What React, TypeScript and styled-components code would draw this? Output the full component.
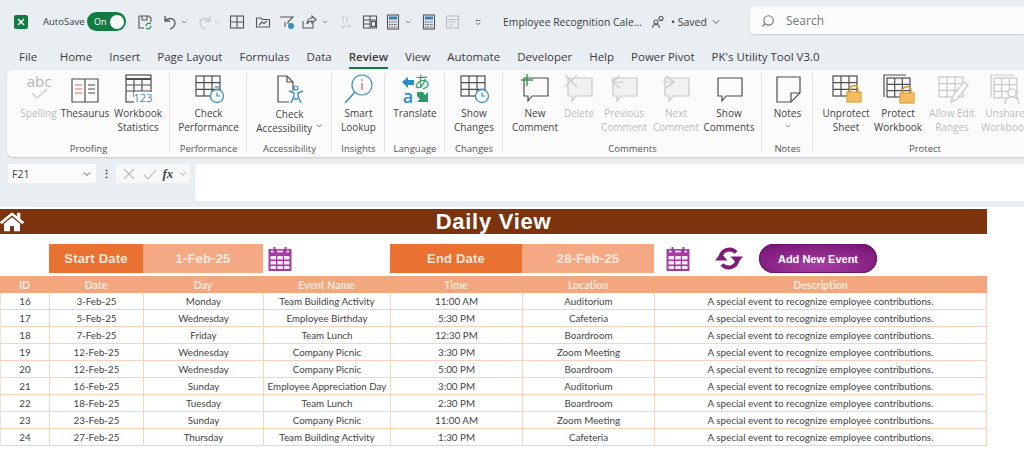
import React from "react";
import styled, { createGlobalStyle } from "styled-components";
import { FaHome } from "react-icons/fa";
import { FiChevronDown, FiSearch } from "react-icons/fi";

const GlobalStyle = createGlobalStyle`
  html, body {
    margin: 0;
    padding: 0;
    background: #fff;
    overflow: hidden;
  }
`;

const uiFont = `"Open Sans", "Noto Sans", sans-serif`;
const sheetFont = `"Lato", "Noto Sans", sans-serif`;
const ink = "#4f4f4f";
const off = "#c9c9c9";

const Page = styled.div`
  width: 1024px;
  height: 474px;
  overflow: hidden;
  background: #fff;
  font-family: ${uiFont};
  color: #3c3c3c;
`;

const Chrome = styled.div`
  height: 207px;
  background: #e9eef3;
  overflow: hidden;
`;

const TitleBar = styled.div`
  height: 43px;
  display: flex;
  align-items: center;
  padding-left: 14px;
`;

const Qat = styled.span<{ $ml: number; $w?: number }>`
  display: inline-flex;
  align-items: center;
  justify-content: center;
  flex: none;
  margin-left: ${(p) => p.$ml}px;
  width: ${(p) => p.$w ?? 16}px;
  height: 18px;
`;

const AutoSaveLabel = styled.span`
  margin-left: 15px;
  font-size: 9.5px;
  width: 38px;
  flex: none;
  white-space: nowrap;
`;

const Toggle = styled.span`
  margin-left: 6px;
  width: 39px;
  height: 19px;
  flex: none;
  border-radius: 10px;
  background: #107c41;
  color: #fff;
  font-size: 9px;
  display: flex;
  align-items: center;
  justify-content: space-between;
  padding: 0 2px 0 7px;
  box-sizing: border-box;
`;

const Knob = styled.span`
  width: 14px;
  height: 14px;
  border-radius: 50%;
  background: #fff;
`;

const DocTitle = styled.span`
  margin-left: 19px;
  width: 137px;
  flex: none;
  font-size: 10.4px;
  white-space: nowrap;
`;

const SavedLabel = styled.span`
  margin-left: 5px;
  width: 72px;
  flex: none;
  font-size: 10.5px;
  display: flex;
  align-items: center;
  gap: 3px;
  white-space: nowrap;
`;

const SearchBox = styled.div`
  margin-left: 7px;
  flex: 1;
  height: 27px;
  margin-top: -2px;
  background: #fbfcfd;
  border-radius: 4px 0 0 4px;
  box-shadow: 0 1px 2px rgba(0, 0, 0, 0.14);
  display: flex;
  align-items: center;
  gap: 11px;
  padding-left: 11px;
  font-size: 12px;
  color: #777;
`;

const Tabs = styled.div`
  height: 27px;
  display: flex;
  align-items: center;
  gap: 17px;
  padding-left: 19px;
  font-size: 11.5px;
`;

const Tab = styled.span<{ $active?: boolean }>`
  position: relative;
  white-space: nowrap;
  font-weight: ${(p) => (p.$active ? 600 : 400)};

  &:first-child {
    margin-right: 5.5px;
  }

  &::after {
    content: "";
    display: ${(p) => (p.$active ? "block" : "none")};
    position: absolute;
    left: 0;
    right: 0;
    bottom: -5px;
    height: 2px;
    background: #107c41;
  }
`;

const Ribbon = styled.div`
  margin-left: 7px;
  height: 87px;
  width: 1040px;
  display: flex;
  background: #fbfbfb;
  border-radius: 6px 0 0 6px;
  box-shadow: 0 1px 2px rgba(0, 0, 0, 0.16);
`;

const Group = styled.div<{ $w: number; $pl?: number }>`
  position: relative;
  flex: none;
  width: ${(p) => p.$w}px;
  padding-left: ${(p) => p.$pl ?? 0}px;
  box-sizing: border-box;
  display: flex;
  flex-direction: column;

  &::after {
    content: "";
    position: absolute;
    right: 0;
    top: 3px;
    bottom: 5px;
    width: 1px;
    background: #e1e1e1;
  }
`;

const ButtonRow = styled.div`
  height: 72px;
  display: flex;
`;

const RibbonButton = styled.div<{ $w: number; $off?: boolean; $drop?: number }>`
  flex: none;
  width: ${(p) => p.$w}px;
  padding-top: 3px;
  display: flex;
  flex-direction: column;
  align-items: center;
  font-size: 10px;
  line-height: 14px;
  text-align: center;
  white-space: nowrap;
  color: ${(p) => (p.$off ? "#bdbdbd" : "#444")};

  svg {
    flex: none;
    overflow: visible;
    margin-bottom: ${(p) => 1 + (p.$drop ?? 0)}px;
  }
`;

const GroupLabel = styled.div<{ $pull?: number }>`
  margin-left: ${(p) => -(p.$pull ?? 0)}px;
  text-align: center;
  font-size: 9.5px;
  line-height: 14px;
  color: #555;
`;

const FormulaRow = styled.div`
  margin-top: 7px;
  padding-left: 8px;
  display: flex;
  align-items: flex-start;
`;

const NameBox = styled.div`
  width: 88px;
  height: 19px;
  box-sizing: border-box;
  background: #fbfcfd;
  border-radius: 2px;
  display: flex;
  align-items: center;
  justify-content: space-between;
  padding: 0 3px 0 4px;
  font-size: 10.5px;
`;

const Dots = styled.span`
  width: 20px;
  text-align: center;
  font-size: 11px;
  line-height: 19px;
  font-weight: 700;
`;

const FxBox = styled.div`
  width: 74px;
  height: 19px;
  background: #f6f8fa;
  border-radius: 2px;
  display: flex;
  align-items: center;
  justify-content: space-between;
  padding: 0 2px 0 5px;
  box-sizing: border-box;
`;

const FxLabel = styled.span`
  font-family: "Liberation Serif", serif;
  font-style: italic;
  font-weight: 700;
  font-size: 13px;
  color: #444;
`;

const FormulaInput = styled.div`
  margin-left: 5px;
  flex: 1;
  height: 37px;
  background: #fff;
  border-radius: 3px 0 0 3px;
`;

const Sheet = styled.div`
  padding-top: 2px;
  width: 987px;
  font-family: ${sheetFont};
`;

const Banner = styled.div`
  height: 25px;
  display: grid;
  grid-template-columns: 25px 1fr 25px;
  align-items: center;
  background: #7b340e;
  color: #fff;
  font-family: "Liberation Sans", Arial, sans-serif;
  font-weight: 700;
  font-size: 22px;
  letter-spacing: 0.7px;
  text-align: center;
`;

const HomeGlyph = styled(FaHome)`
  width: 24px;
  height: 22px;
  color: #fff;
`;

const columns = "49px 94px 120px 127px 132px 132px 333px";

const FilterRow = styled.div`
  display: grid;
  grid-template-columns: ${columns};
  height: 25px;
  margin: 10px 0 7px;
  align-items: stretch;
`;

const DateCell = styled.div<{ $label?: boolean }>`
  display: flex;
  align-items: center;
  justify-content: center;
  background: ${(p) => (p.$label ? "#e97132" : "#f4a884")};
  color: ${(p) => (p.$label ? "#fde6d8" : "#fdebe0")};
  font-family: "Liberation Sans", Arial, sans-serif;
  font-weight: 700;
  font-size: 13px;
  letter-spacing: 0.2px;
`;

const ToolCell = styled.div`
  display: flex;
  align-items: center;
  padding-left: 5px;
`;

const EventTools = styled.div`
  display: flex;
  align-items: center;
  padding-left: 12px;
`;

const RefreshIcon = styled.svg`
  margin-left: 25px;
  flex: none;
`;

const AddButton = styled.div`
  margin-left: 16px;
  width: 118px;
  height: 29px;
  flex: none;
  border-radius: 15px;
  background: radial-gradient(ellipse 70% 90% at 50% 75%, #a83fa3 0%, #8a2587 60%, #741672 100%);
  box-shadow: inset 0 0 0 1px #74146f;
  color: #fff;
  display: flex;
  align-items: center;
  justify-content: center;
  font-family: "Liberation Sans", Arial, sans-serif;
  font-weight: 700;
  font-size: 11px;
`;

const Table = styled.div`
  display: grid;
  grid-template-columns: ${columns};
  grid-auto-rows: 17px;
`;

const HeadCell = styled.div`
  display: flex;
  align-items: center;
  justify-content: center;
  background: #f2a77f;
  color: #fce9de;
  font-weight: 700;
  font-size: 10.5px;
`;

const BodyCell = styled.div`
  display: flex;
  align-items: center;
  justify-content: center;
  box-sizing: border-box;
  border-left: 1px solid #f5d3bf;
  border-bottom: 1px solid #f5d3bf;
  font-size: 9.8px;
  color: #444;
  white-space: nowrap;

  &:first-child,
  &:nth-child(7n + 1) {
    border-left-color: #eee3dc;
  }

  &:nth-child(7n) {
    border-right: 1px solid #f5d3bf;
  }
`;

const headers = ["ID", "Date", "Day", "Event Name", "Time", "Location", "Description"];
const blurb = "A special event to recognize employee contributions.";

const rows = [
  ["16", "3-Feb-25", "Monday", "Team Building Activity", "11:00 AM", "Auditorium"],
  ["17", "5-Feb-25", "Wednesday", "Employee Birthday", "5:30 PM", "Cafeteria"],
  ["18", "7-Feb-25", "Friday", "Team Lunch", "12:30 PM", "Boardroom"],
  ["19", "12-Feb-25", "Wednesday", "Company Picnic", "3:30 PM", "Zoom Meeting"],
  ["20", "12-Feb-25", "Wednesday", "Company Picnic", "5:00 PM", "Boardroom"],
  ["21", "16-Feb-25", "Sunday", "Employee Appreciation Day", "3:00 PM", "Auditorium"],
  ["22", "18-Feb-25", "Tuesday", "Team Lunch", "2:30 PM", "Boardroom"],
  ["23", "23-Feb-25", "Sunday", "Company Picnic", "11:00 AM", "Zoom Meeting"],
  ["24", "27-Feb-25", "Thursday", "Team Building Activity", "1:30 PM", "Cafeteria"],
];

const tabs = ["File", "Home", "Insert", "Page Layout", "Formulas", "Data", "Review", "View", "Automate", "Developer", "Help", "Power Pivot", "PK's Utility Tool V3.0"];

function Glyph({ children, size = 32 }: { children: React.ReactNode; size?: number }) {
  return (
    <svg width={size} height={size} viewBox="0 0 32 32" fill="none" stroke={ink} strokeWidth="1.2">
      {children}
    </svg>
  );
}

function Small({ children }: { children: React.ReactNode }) {
  return (
    <svg width="16" height="16" viewBox="0 0 16 16" fill="none" stroke="#555" strokeWidth="1.1">
      {children}
    </svg>
  );
}

function Chevron({ size = 8, color = "#666" }: { size?: number; color?: string }) {
  return <FiChevronDown size={size} color={color} style={{ flex: "none" }} />;
}

function SheetGrid({ x = 4, y = 4, w = 22, h = 20, c = ink }: { x?: number; y?: number; w?: number; h?: number; c?: string }) {
  const cw = w / 3;
  const ch = h / 3;
  return (
    <g stroke={c}>
      <rect x={x} y={y} width={w} height={h} />
      <path d={`M${x} ${y + ch}H${x + w}M${x} ${y + 2 * ch}H${x + w}M${x + cw} ${y}V${y + h}M${x + 2 * cw} ${y}V${y + h}`} />
    </g>
  );
}

function Lock({ x, y }: { x: number; y: number }) {
  return (
    <g>
      <path d={`M${x + 3} ${y + 6}V${y + 3}a4 3.4 0 0 1 8 0V${y + 6}`} stroke="#e0a030" strokeWidth="1.6" />
      <rect x={x} y={y + 6} width="14" height="10" fill="#f4bd62" stroke="#e0a030" />
    </g>
  );
}

function Clock({ x, y, r = 6 }: { x: number; y: number; r?: number }) {
  return (
    <g>
      <circle cx={x} cy={y} r={r} fill="#fbfbfb" stroke="#3d8fc0" strokeWidth="1.3" />
      <path d={`M${x} ${y - 3.5}V${y}H${x + 3}`} stroke="#3d8fc0" />
    </g>
  );
}

function Bubble({ c = ink, fill = "none" }: { c?: string; fill?: string }) {
  return <path d="M5 5H29V23H13L9 28V23H5Z" stroke={c} fill={fill} />;
}

function Calendar() {
  return (
    <svg width="24" height="24" viewBox="0 0 24 24">
      <rect x="0.5" y="2" width="23" height="22" fill="#a23c9f" />
      <path d="M3 4.5h3M9 4.5h6M18 4.5h3" stroke="#e8cfe7" strokeWidth="2" />
      <path d="M6.5 0v5M17.5 0v5" stroke="#a23c9f" strokeWidth="2" />
      <g fill="#f6e9f5">
        <rect x="2.5" y="9" width="5.5" height="3.5" />
        <rect x="9.3" y="9" width="5.5" height="3.5" />
        <rect x="16" y="9" width="5.5" height="3.5" />
        <rect x="2.5" y="14" width="5.5" height="3.5" />
        <rect x="9.3" y="14" width="5.5" height="3.5" />
        <rect x="16" y="14" width="5.5" height="3.5" />
        <rect x="2.5" y="19" width="5.5" height="3" />
        <rect x="9.3" y="19" width="5.5" height="3" />
        <rect x="16" y="19" width="5.5" height="3" />
      </g>
    </svg>
  );
}

function Refresh() {
  return (
    <RefreshIcon width="28" height="25" viewBox="0 0 28 25" fill="#7d1d78">
      <path d="M5.5 11A9 9 0 0 1 21 6.5" fill="none" stroke="#7d1d78" strokeWidth="4" />
      <path d="M28 10.5H15.5L22 18Z" />
      <path d="M22.5 14A9 9 0 0 1 7 18.5" fill="none" stroke="#7d1d78" strokeWidth="4" />
      <path d="M0 14.5H12.5L6 7Z" />
    </RefreshIcon>
  );
}

const icons = {
  spelling: (
    <Glyph>
      <text x="16" y="14" textAnchor="middle" fontSize="15" fill="#b5b5b5" stroke="none" fontFamily="Open Sans, sans-serif">abc</text>
      <path d="M9 20l5 5 10-9" stroke={off} />
    </Glyph>
  ),
  thesaurus: (
    <Glyph>
      <path d="M3 6H16V29H3ZM16 6H29V29H16Z" />
      <path d="M6 12h7M6 16h7M6 20h7" stroke="#d9706a" />
      <path d="M19 12h7M19 16h7M19 20h7" />
    </Glyph>
  ),
  stats: (
    <Glyph>
      <rect x="4" y="2" width="25" height="27" />
      <path d="M4 6H29" strokeWidth="2" />
      <path d="M4 12H29M4 18H29M12 6V24M20 6V18" />
      <rect x="12" y="19" width="18" height="11" fill="#fbfbfb" stroke="none" />
      <text x="21" y="29" textAnchor="middle" fontSize="11" fill="#3d8fc0" stroke="none" fontFamily="Open Sans, sans-serif">123</text>
    </Glyph>
  ),
  performance: (
    <Glyph>
      <SheetGrid x={3} y={3} w={24} h={20} />
      <Clock x={24} y={23} r={6.5} />
      <path d="M22 14h4" stroke="#3d8fc0" />
    </Glyph>
  ),
  accessibility: (
    <Glyph>
      <path d="M19 18V9L13 3H4V29H15" />
      <path d="M13 3V9H19" />
      <circle cx="22" cy="15" r="2" stroke="#3d8fc0" />
      <path d="M15 18l5 2v3l-3 7M29 18l-5 2v3l3 7M20 26h4" stroke="#3d8fc0" strokeWidth="1.4" />
    </Glyph>
  ),
  lookup: (
    <Glyph>
      <circle cx="19" cy="12" r="10" stroke="#3d8fc0" />
      <path d="M12 19L2 30" stroke="#3d8fc0" strokeWidth="1.5" />
      <path d="M19 10V17" stroke="#d9706a" strokeWidth="1.4" />
      <circle cx="19" cy="7" r="0.9" fill="#d9706a" stroke="none" />
    </Glyph>
  ),
  translate: (
    <Glyph>
      <path d="M3 9l6-5v3h6v5H9v3Z" fill="#2a8dc5" stroke="none" />
      <text x="23" y="15" textAnchor="middle" fontSize="16" fill="#2e9b6a" stroke="none" fontFamily="Noto Sans CJK JP, sans-serif">あ</text>
      <text x="9" y="30" textAnchor="middle" fontSize="18" fontWeight="600" fill="#2a8dc5" stroke="none" fontFamily="Open Sans, sans-serif">a</text>
      <path d="M18 19h6l2 3 3-3v10H18l3-3-3-3Z" fill="#2e9b6a" stroke="none" />
    </Glyph>
  ),
  changes: (
    <Glyph>
      <SheetGrid x={3} y={3} w={24} h={20} />
      <Clock x={24} y={23} r={6.5} />
    </Glyph>
  ),
  newComment: (
    <Glyph>
      <Bubble />
      <path d="M8 1V13M2 7H14" stroke="#2e9b50" strokeWidth="1.4" />
    </Glyph>
  ),
  deleteComment: (
    <Glyph>
      <Bubble c={off} fill="#f1f1f1" />
      <path d="M2 2L14 14M14 2L2 14" stroke={off} />
    </Glyph>
  ),
  previous: (
    <Glyph>
      <Bubble c={off} fill="#f1f1f1" />
      <path d="M12 3L4 9L12 15M4 9H16" stroke={off} />
    </Glyph>
  ),
  next: (
    <Glyph>
      <Bubble c={off} fill="#f1f1f1" />
      <path d="M6 3L14 9L6 15M14 9H2" stroke={off} />
    </Glyph>
  ),
  showComments: (
    <Glyph>
      <Bubble />
    </Glyph>
  ),
  notes: (
    <Glyph>
      <path d="M5 4H28V20L19 29H5Z" />
      <path d="M28 20H19V29" />
    </Glyph>
  ),
  unprotect: (
    <Glyph>
      <SheetGrid x={3} y={3} w={24} h={20} />
      <Lock x={17} y={13} />
    </Glyph>
  ),
  protect: (
    <Glyph>
      <path d="M2 24V2H24" />
      <SheetGrid x={5} y={5} w={23} h={19} />
      <Lock x={18} y={14} />
    </Glyph>
  ),
  allowEdit: (
    <Glyph>
      <SheetGrid x={3} y={4} w={24} h={20} c={off} />
      <path d="M15 29l2-6L28 9l4 3-11 14Z" stroke={off} fill="#fbfbfb" />
    </Glyph>
  ),
  unshare: (
    <Glyph>
      <path d="M2 24V2H25" stroke={off} />
      <SheetGrid x={5} y={5} w={23} h={20} c={off} />
      <circle cx="23" cy="20" r="4" fill="#fbfbfb" stroke={off} />
      <path d="M16 31c0-5 3-7 7-7s7 2 7 7" fill="#fbfbfb" stroke={off} />
    </Glyph>
  ),
};

type BtnProps = { w: number; icon: keyof typeof icons; lines: string[]; off?: boolean; drop?: number; more?: boolean };

function Btn({ w, icon, lines, off: disabled, drop, more }: BtnProps) {
  return (
    <RibbonButton $w={w} $off={disabled} $drop={drop}>
      {icons[icon]}
      {lines.map((line, i) => (
        <span key={i}>
          {line}
          {more && i === lines.length - 1 ? <Chevron size={8} /> : null}
        </span>
      ))}
    </RibbonButton>
  );
}

function RibbonGroup({ w, pl, label, children }: { w: number; pl?: number; label: string; children: React.ReactNode }) {
  return (
    <Group $w={w} $pl={pl}>
      <ButtonRow>{children}</ButtonRow>
      <GroupLabel $pull={pl}>{label}</GroupLabel>
    </Group>
  );
}

export default function App() {
  return (
    <Page>
      <GlobalStyle />
      <Chrome>
        <TitleBar>
          <Qat $ml={0} $w={14}>
            <svg width="14" height="14" viewBox="0 0 14 14">
              <rect width="14" height="14" rx="2" fill="#107c41" />
              <path d="M4 4l6 6M10 4l-6 6" stroke="#fff" strokeWidth="1.6" />
            </svg>
          </Qat>
          <AutoSaveLabel>AutoSave</AutoSaveLabel>
          <Toggle>
            On
            <Knob />
          </Toggle>
          <Qat $ml={11}>
            <Small>
              <path d="M2 2H12L14 4V8M2 2V14H7M5 2V6H10V2" />
              <path d="M9 12a3 3 0 0 1 5-2M14 12a3 3 0 0 1-5 2" stroke="#2e9b50" strokeWidth="1.4" />
            </Small>
          </Qat>
          <Qat $ml={9}>
            <Small>
              <path d="M3 2V7H8M3 7C6 3 13 4 13 9c0 3-2 5-5 6" strokeWidth="1.3" />
            </Small>
          </Qat>
          <Qat $ml={1} $w={10}>
            <Chevron />
          </Qat>
          <Qat $ml={8}>
            <Small>
              <path d="M13 2V7H8M13 7C10 3 3 4 3 9c0 3 2 5 5 6" stroke="#c4c9cd" strokeWidth="1.3" />
            </Small>
          </Qat>
          <Qat $ml={-2} $w={12}>
            <Chevron color="#bbb" />
          </Qat>
          <Qat $ml={6}>
            <Small>
              <rect x="1.5" y="2" width="13" height="12" />
              <path d="M8 2V14M1.5 8H14.5" />
            </Small>
          </Qat>
          <Qat $ml={10}>
            <Small>
              <path d="M1.5 4H6L7 5.5H14.5V13H1.5Z" />
              <path d="M4 11l3-3 2 1.5L12 7" />
            </Small>
          </Qat>
          <Qat $ml={8}>
            <Small>
              <path d="M1 3H14L9 8V10M6 8V13" />
              <circle cx="12" cy="12" r="3" fill="#3d8fc0" stroke="none" />
            </Small>
          </Qat>
          <Qat $ml={6}>
            <Small>
              <path d="M2 7V14H12V9" />
              <path d="M6 10c0-4 2-6 5-6V2l4 3.5L11 9V7c-2 0-4 1-5 3Z" />
            </Small>
          </Qat>
          <Qat $ml={2} $w={12}>
            <Chevron />
          </Qat>
          <Qat $ml={7}>
            <Small>
              <path d="M5 2V8M9 2V8M3 11l2 3 2-3M9 14l2-3 2 3" stroke="#c4c9cd" />
            </Small>
          </Qat>
          <Qat $ml={8}>
            <Small>
              <rect x="1.5" y="2" width="13" height="12" />
              <path d="M1.5 6H14.5M1.5 10H8M8 2V14" />
              <rect x="9.5" y="7.5" width="4" height="5" />
            </Small>
          </Qat>
          <Qat $ml={7}>
            <Small>
              <rect x="2.5" y="1" width="11" height="14" fill="#dfe5ea" />
              <rect x="4" y="2.5" width="8" height="3" fill="#3d7fb5" stroke="none" />
              <path d="M4 8h8M4 10.5h8M4 13h8" strokeDasharray="1.5 1" />
            </Small>
          </Qat>
          <Qat $ml={1} $w={12}>
            <Chevron />
          </Qat>
          <Qat $ml={7}>
            <Small>
              <rect x="2.5" y="1" width="11" height="14" fill="#dfe5ea" />
              <rect x="4" y="2.5" width="8" height="3" fill="#3d7fb5" stroke="none" />
              <path d="M4 8h8M4 10.5h8M4 13h8" strokeDasharray="1.5 1" />
            </Small>
          </Qat>
          <Qat $ml={8}>
            <Small>
              <rect x="1.5" y="2" width="12" height="12" stroke="#b9bfc4" />
              <path d="M1.5 5.5H13.5M4 8h7M4 11h4" stroke="#b9bfc4" />
            </Small>
          </Qat>
          <Qat $ml={11} $w={12}>
            <Small>
              <path d="M5 6h6M5 8.5l3 3 3-3" />
            </Small>
          </Qat>
          <DocTitle>Employee Recognition Cale...</DocTitle>
          <Qat $ml={10}>
            <Small>
              <circle cx="6" cy="8" r="2" />
              <path d="M2.5 14c0-2 1.5-3.5 3.5-3.5S9.5 12 9.5 14" />
              <circle cx="11" cy="4.5" r="2" />
            </Small>
          </Qat>
          <SavedLabel>
            • Saved <Chevron size={12} />
          </SavedLabel>
          <SearchBox>
            <FiSearch size={14} style={{ transform: "scaleX(-1)" }} />
            Search
          </SearchBox>
        </TitleBar>
        <Tabs>
          {tabs.map((tab) => (
            <Tab key={tab} $active={tab === "Review"}>
              {tab}
            </Tab>
          ))}
        </Tabs>
        <Ribbon>
          <RibbonGroup w={163} pl={10} label="Proofing">
            <Btn w={43} icon="spelling" lines={["Spelling"]} off />
            <Btn w={50} icon="thesaurus" lines={["Thesaurus"]} />
            <Btn w={56} icon="stats" lines={["Workbook", "Statistics"]} />
          </RibbonGroup>
          <RibbonGroup w={77} label="Performance">
            <Btn w={77} icon="performance" lines={["Check", "Performance"]} />
          </RibbonGroup>
          <RibbonGroup w={85} label="Accessibility">
            <Btn w={85} icon="accessibility" drop={1} lines={["Check", "Accessibility "]} more />
          </RibbonGroup>
          <RibbonGroup w={53} label="Insights">
            <Btn w={53} icon="lookup" lines={["Smart", "Lookup"]} />
          </RibbonGroup>
          <RibbonGroup w={60} label="Language">
            <Btn w={60} icon="translate" lines={["Translate"]} />
          </RibbonGroup>
          <RibbonGroup w={58} label="Changes">
            <Btn w={58} icon="changes" lines={["Show", "Changes"]} />
          </RibbonGroup>
          <RibbonGroup w={259} pl={8} label="Comments">
            <Btn w={48} icon="newComment" lines={["New", "Comment"]} />
            <Btn w={40} icon="deleteComment" lines={["Delete"]} off />
            <Btn w={50} icon="previous" lines={["Previous", "Comment"]} off />
            <Btn w={54} icon="next" lines={["Next", "Comment"]} off />
            <Btn w={52} icon="showComments" lines={["Show", "Comments"]} />
          </RibbonGroup>
          <RibbonGroup w={51} label="Notes">
            <Btn w={51} icon="notes" lines={["Notes", ""]} more />
          </RibbonGroup>
          <RibbonGroup w={224} pl={7} label="Protect">
            <Btn w={52} icon="unprotect" lines={["Unprotect", "Sheet"]} />
            <Btn w={52} icon="protect" lines={["Protect", "Workbook"]} />
            <Btn w={56} icon="allowEdit" lines={["Allow Edit", "Ranges"]} off />
            <Btn w={50} icon="unshare" lines={["Unshare", "Workbook"]} off />
          </RibbonGroup>
        </Ribbon>
        <FormulaRow>
          <NameBox>
            F21
            <Chevron size={12} />
          </NameBox>
          <Dots>⋮</Dots>
          <FxBox>
            <Small>
              <path d="M3 3L13 13M13 3L3 13" stroke="#bbb" />
            </Small>
            <Small>
              <path d="M2 9L6 13L14 4" stroke="#bbb" />
            </Small>
            <FxLabel>fx</FxLabel>
            <Chevron size={10} color="#999" />
          </FxBox>
          <FormulaInput />
        </FormulaRow>
      </Chrome>
      <Sheet>
        <Banner>
          <HomeGlyph />
          Daily View
          <span />
        </Banner>
        <FilterRow>
          <span />
          <DateCell $label>Start Date</DateCell>
          <DateCell>1-Feb-25</DateCell>
          <ToolCell>
            <Calendar />
          </ToolCell>
          <DateCell $label>End Date</DateCell>
          <DateCell>28-Feb-25</DateCell>
          <EventTools>
            <Calendar />
            <Refresh />
            <AddButton>Add New Event</AddButton>
          </EventTools>
        </FilterRow>
        <Table>
          {headers.map((h) => (
            <HeadCell key={h}>{h}</HeadCell>
          ))}
          {rows.map((row) =>
            [...row, blurb].map((cell, i) => <BodyCell key={`${row[0]}-${i}`}>{cell}</BodyCell>)
          )}
        </Table>
      </Sheet>
    </Page>
  );
}
